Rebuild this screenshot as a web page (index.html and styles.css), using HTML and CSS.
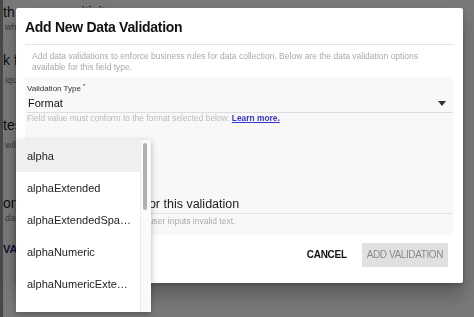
FILE: index.html
```html
<!DOCTYPE html>
<html>
  <head>
    <meta charset='utf-8'>
    <title>Add New Data Validation</title>
    <link rel="stylesheet" href="styles.css">
  </head>
  <body>
    <div id='page'>
      <div class='page_title first'>th case sensitivity</div>
      <div class='page_hint h1'>where values are compared</div>
      <div class='page_title t2'>k field as required</div>
      <div class='page_hint h2'>ique values only</div>
      <div class='page_title t3'>testation</div>
      <div class='page_hint h3'>will confirm this field</div>
      <div class='page_title t4'>ons</div>
      <div class='page_hint h4'>data validations yet</div>
      <div class='page_link'>VALIDATION</div>
    </div>

    <div id='backdrop'>
      <div id='dialog'>
        <h1 id='dialog_title'>Add New Data Validation</h1>
        <p id='dialog_intro'>Add data validations to enforce business rules for data collection. Below are the data validation options available for this field type.</p>

        <div id='fields'>
          <div class='field'>
            <label>Validation Type<sup>*</sup></label>
            <div class='select'>
              <span>Format</span>
              <svg width='8' height='5' viewBox='0 0 8 5'><path d='M0 0h8L4 5z' fill='#333'/></svg>
            </div>
            <div class='helper'>Field value must conform to the format selected below. <a href='#'>Learn more.</a></div>
          </div>

          <div class='field error_field'>
            <div class='input'>Enter error message for this validation</div>
            <div class='helper small'>Error message shown when the user inputs invalid text.</div>
          </div>
        </div>

        <div id='actions'>
          <div class='button'>Cancel</div>
          <div class='button disabled'>Add Validation</div>
        </div>

        <div id='format_menu'>
          <div class='option selected'>alpha</div>
          <div class='option'>alphaExtended</div>
          <div class='option'>alphaExtendedSpa…</div>
          <div class='option'>alphaNumeric</div>
          <div class='option'>alphaNumericExte…</div>
          <div class='scrollbar'><div class='thumb'></div></div>
        </div>
      </div>
    </div>
  </body>
</html>
```

FILE: styles.css
```css
body {
  margin: 0;
  background: #fff;
  font-family: "Liberation Sans", Arial, sans-serif;
  overflow: hidden;
}

#page {
  padding: 4px 0 0 0;
  border-left: 3px solid #999;
  height: 317px;
  box-sizing: border-box;
}

.page_title {
  font-size: 14px;
  line-height: 16px;
  color: #1a1a1a;
  white-space: nowrap;
}

.page_title.t2 { margin-top: 20px; }
.page_title.t3 { margin-top: 32px; }
.page_title.t4 { margin-top: 45px; }

.page_hint {
  font-size: 9px;
  line-height: 10px;
  color: #777;
  margin-left: 2px;
  white-space: nowrap;
}

.page_hint.h1 { margin-top: 2px; }
.page_hint.h2 { margin-top: 7px; }
.page_hint.h3 { margin-top: 7px; }
.page_hint.h4 { margin-top: 2px; font-style: italic; }

.page_link {
  margin-top: 20px;
  font-size: 11px;
  line-height: 12px;
  font-weight: bold;
  color: #1e1e70;
  white-space: nowrap;
}

#backdrop {
  position: fixed;
  top: 0;
  left: 0;
  right: 0;
  bottom: 0;
  background: rgba(0, 0, 0, 0.53);
  padding: 8px 11px 0 16px;
}

#dialog {
  position: relative;
  height: 275px;
  background: #fff;
  border-radius: 2px;
  box-shadow: 0 12px 18px rgba(0, 0, 0, 0.25), 0 2px 4px rgba(0, 0, 0, 0.2);
  padding: 0 10px 0 9px;
  display: flex;
  flex-direction: column;
}

#dialog_title {
  margin: 0;
  padding: 10px 0 7px 0;
  font-size: 14px;
  line-height: 19px;
  font-weight: bold;
  letter-spacing: -0.3px;
  color: #111;
  border-bottom: 1px solid #e4e4e4;
}

#dialog_intro {
  margin: 0;
  padding: 6px 0 5px 7px;
  font-size: 8.5px;
  line-height: 10.5px;
  color: #aaa;
}

#fields {
  background: #f8f8f8;
  height: 158px;
  padding: 0 0 0 2px;
  box-sizing: border-box;
}

.field label {
  display: block;
  padding-top: 4px;
  font-size: 8px;
  line-height: 11px;
  color: #333;
}

.field sup {
  font-size: 6px;
  vertical-align: 3px;
  margin-left: 2px;
}

.select {
  display: flex;
  justify-content: space-between;
  align-items: center;
  padding: 2px 7px 1px 1px;
  border-bottom: 1px solid #ddd;
  font-size: 11px;
  line-height: 15px;
  color: #111;
}

.helper {
  font-size: 8.4px;
  line-height: 10px;
  color: #bbb;
}

.helper a {
  color: #3535cc;
  font-weight: bold;
}

.helper.small {
  font-size: 8.5px;
  color: #aaa;
  padding-top: 2px;
}

.error_field {
  margin-top: 74px;
}

.input {
  font-size: 12.5px;
  line-height: 14px;
  color: #222;
  padding: 0 0 2px 1px;
  border-bottom: 1px solid #e2e2e2;
}

#actions {
  display: flex;
  justify-content: flex-end;
  align-items: center;
  gap: 15px;
  padding: 8px 5px 0 0;
}

.button {
  font-size: 10px;
  line-height: 12px;
  font-weight: bold;
  letter-spacing: -0.3px;
  text-transform: uppercase;
  color: #111;
  padding: 6px 0;
}

.button.disabled {
  background: #e0e0e0;
  color: #8a8a8a;
  font-weight: normal;
  letter-spacing: -0.4px;
  padding: 6px 5px;
}

#format_menu {
  position: absolute;
  left: 0;
  top: 132px;
  width: 135px;
  height: 172px;
  background: #fff;
  box-shadow: 0 2px 6px rgba(0, 0, 0, 0.3);
  overflow: hidden;
}

.option {
  height: 32px;
  line-height: 32px;
  padding-left: 11px;
  font-size: 11px;
  color: #222;
}

.option.selected {
  background: #efefef;
}

.scrollbar {
  position: absolute;
  top: 0;
  right: 0;
  bottom: 0;
  width: 10px;
  background: #fafafa;
  border-left: 1px solid #ececec;
}

.thumb {
  margin: 3px 0 0 2px;
  width: 4px;
  height: 67px;
  border-radius: 3px;
  background: #b0b0b0;
}
```
